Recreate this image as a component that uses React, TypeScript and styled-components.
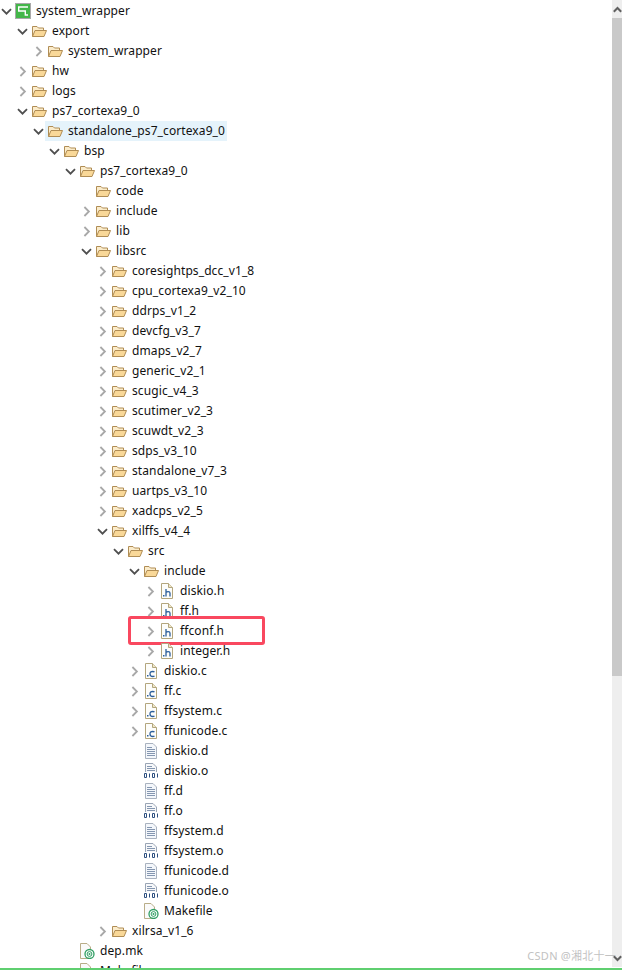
import React from "react";
import styled, { createGlobalStyle } from "styled-components";

type Kind = "project" | "folder" | "h" | "c" | "text" | "object" | "make";
type Toggle = "open" | "closed" | "none";
type Node = { depth: number; kind: Kind; label: string; toggle: Toggle; selected?: boolean; marked?: boolean };

const n = (depth: number, kind: Kind, label: string, toggle: Toggle = "none", extra = {}): Node => ({
  depth,
  kind,
  label,
  toggle,
  ...extra,
});

const nodes: Node[] = [
  n(0, "project", "system_wrapper", "open"),
  n(1, "folder", "export", "open"),
  n(2, "folder", "system_wrapper", "closed"),
  n(1, "folder", "hw", "closed"),
  n(1, "folder", "logs", "closed"),
  n(1, "folder", "ps7_cortexa9_0", "open"),
  n(2, "folder", "standalone_ps7_cortexa9_0", "open", { selected: true }),
  n(3, "folder", "bsp", "open"),
  n(4, "folder", "ps7_cortexa9_0", "open"),
  n(5, "folder", "code"),
  n(5, "folder", "include", "closed"),
  n(5, "folder", "lib", "closed"),
  n(5, "folder", "libsrc", "open"),
  n(6, "folder", "coresightps_dcc_v1_8", "closed"),
  n(6, "folder", "cpu_cortexa9_v2_10", "closed"),
  n(6, "folder", "ddrps_v1_2", "closed"),
  n(6, "folder", "devcfg_v3_7", "closed"),
  n(6, "folder", "dmaps_v2_7", "closed"),
  n(6, "folder", "generic_v2_1", "closed"),
  n(6, "folder", "scugic_v4_3", "closed"),
  n(6, "folder", "scutimer_v2_3", "closed"),
  n(6, "folder", "scuwdt_v2_3", "closed"),
  n(6, "folder", "sdps_v3_10", "closed"),
  n(6, "folder", "standalone_v7_3", "closed"),
  n(6, "folder", "uartps_v3_10", "closed"),
  n(6, "folder", "xadcps_v2_5", "closed"),
  n(6, "folder", "xilffs_v4_4", "open"),
  n(7, "folder", "src", "open"),
  n(8, "folder", "include", "open"),
  n(9, "h", "diskio.h", "closed"),
  n(9, "h", "ff.h", "closed"),
  n(9, "h", "ffconf.h", "closed", { marked: true }),
  n(9, "h", "integer.h", "closed"),
  n(8, "c", "diskio.c", "closed"),
  n(8, "c", "ff.c", "closed"),
  n(8, "c", "ffsystem.c", "closed"),
  n(8, "c", "ffunicode.c", "closed"),
  n(8, "text", "diskio.d"),
  n(8, "object", "diskio.o"),
  n(8, "text", "ff.d"),
  n(8, "object", "ff.o"),
  n(8, "text", "ffsystem.d"),
  n(8, "object", "ffsystem.o"),
  n(8, "text", "ffunicode.d"),
  n(8, "object", "ffunicode.o"),
  n(8, "make", "Makefile"),
  n(6, "folder", "xilrsa_v1_6", "closed"),
  n(4, "make", "dep.mk"),
  n(4, "make", "Makefile"),
];

const GlobalStyle = createGlobalStyle`
  html, body {
    margin: 0;
    padding: 0;
    background: #fff;
  }
`;

const Page = styled.div`
  width: 622px;
  height: 970px;
  display: flex;
  flex-direction: column;
  overflow: hidden;
  font-family: "Noto Sans", "Noto Sans CJK SC", sans-serif;
  font-size: 12px;
  letter-spacing: 0.1px;
  color: #111;
`;

const Main = styled.div`
  flex: 1;
  min-height: 0;
  display: flex;
  position: relative;
`;

const Tree = styled.div`
  flex: 1;
  min-width: 0;
  padding-top: 1px;
  overflow: hidden;
`;

const Row = styled.div<{ $depth: number }>`
  position: relative;
  height: 20px;
  display: flex;
  align-items: center;
  padding-left: ${(p) => p.$depth * 16}px;
  white-space: nowrap;
`;

const ToggleSlot = styled.span`
  width: 13px;
  height: 20px;
  display: flex;
  align-items: center;
  justify-content: center;
  flex: none;
`;

const Item = styled.span<{ $selected?: boolean }>`
  height: 20px;
  display: flex;
  align-items: center;
  gap: 5px;
  padding: 0 2px;
  background: ${(p) => (p.$selected ? "#e5f3fb" : "transparent")};
`;

const Label = styled.span`
  line-height: 20px;
`;

const Mark = styled.span`
  position: absolute;
  left: 128px;
  top: -5px;
  width: 131px;
  height: 23px;
  border: 3px solid #f9485f;
  border-radius: 3px;
`;

const Scrollbar = styled.div`
  width: 10px;
  flex: none;
  display: flex;
  flex-direction: column;
  background: #eeeeee;
  margin-bottom: 1px;
`;

const ScrollButton = styled.div`
  height: 18px;
  display: flex;
  align-items: center;
  justify-content: center;
  flex: none;
`;

const Thumb = styled.div`
  height: 658px;
  background: #c9c9c9;
`;

const ScrollTrack = styled.div`
  flex: 1;
`;

const Watermark = styled.span`
  position: absolute;
  right: 6px;
  bottom: 4px;
  font-size: 11px;
  line-height: 16px;
  letter-spacing: 0.25px;
  color: #c2c2c2;
  white-space: nowrap;
`;

const StatusLine = styled.div`
  height: 2px;
  flex: none;
  background: #5fcf70;
`;

const Chevron = ({ open }: { open: boolean }) => (
  <svg width="11" height="11" viewBox="0 0 11 11" fill="none">
    {open ? (
      <path d="M1 3.2 L5.5 7.7 L10 3.2" stroke="#4f4f4f" strokeWidth="1.8" />
    ) : (
      <path d="M3.4 1 L7.9 5.5 L3.4 10" stroke="#a8a8a8" strokeWidth="1.8" />
    )}
  </svg>
);

const FolderIcon = () => (
  <svg width="16" height="16" viewBox="0 0 16 16">
    <path d="M1.5 13.5 V3.5 H6 L7.5 5 H12.5 V7.5" fill="#fbeccb" stroke="#b08d55" />
    <path d="M1.5 13.5 L4 7.5 H15.5 L13 13.5 Z" fill="#f9d898" stroke="#b08d55" strokeLinejoin="round" />
  </svg>
);

const ProjectIcon = () => (
  <svg width="16" height="16" viewBox="0 0 16 16">
    <rect x="0.5" y="0.5" width="15" height="15" fill="#43b649" stroke="#a9a9a9" />
    <path d="M3 4 H13 M3.7 4 V8 H10.3 V12 H13" fill="none" stroke="#fff" strokeWidth="1.4" />
  </svg>
);

const SourceIcon = ({ letter }: { letter: "h" | "c" }) => (
  <svg width="16" height="16" viewBox="0 0 16 16">
    <path d="M2.5 0.5 H9.5 L13.5 4.5 V15.5 H2.5 Z" fill="#fdfdfa" stroke="#b3a67e" />
    <path d="M9.5 0.5 V4.5 H13.5" fill="#efe6c8" stroke="#b3a67e" />
    <rect x="4" y="12" width="1.5" height="1.5" fill="#2d5f9b" />
    {letter === "h" ? (
      <path d="M7 6 V13.5 M7 9.5 Q7.6 8.6 9.2 8.6 Q11 8.6 11 10 V13.5" fill="none" stroke="#2d5f9b" strokeWidth="1.3" />
    ) : (
      <path d="M11.5 9 Q10.8 8.5 9.8 8.5 Q7 8.5 7 11 Q7 13.5 9.8 13.5 Q10.8 13.5 11.5 13" fill="none" stroke="#2d5f9b" strokeWidth="1.3" />
    )}
  </svg>
);

const TextIcon = () => (
  <svg width="16" height="16" viewBox="0 0 16 16">
    <path d="M2.5 0.5 H10 L13.5 4 V15.5 H2.5 Z" fill="#f4f7fb" stroke="#a9b2bf" />
    <path d="M4 4.5 H9 M4 6.5 H12 M4 8.5 H12 M4 10.5 H12 M4 12.5 H12" stroke="#8496b0" />
  </svg>
);

const ObjectIcon = () => (
  <svg width="16" height="16" viewBox="0 0 16 16">
    <path d="M2.5 0.5 H10 L13.5 4 V15.5 H2.5 Z" fill="#f7f8fa" stroke="#9aa5b5" />
    <path d="M4 3.5 H9 M4 5.5 H12 M4 7.5 H12" stroke="#8496b0" />
    <rect x="0" y="9" width="16" height="7" fill="#fff" />
    <path d="M1.5 10.5 H3.5 V14.5 H1.5 Z M6.5 10.5 V14.5 M9.5 10.5 H11.5 V14.5 H9.5 Z M14.5 10.5 V14.5" fill="none" stroke="#2d4f80" />
  </svg>
);

const MakeIcon = () => (
  <svg width="16" height="16" viewBox="0 0 16 16">
    <path d="M1.5 0.5 H8 L11.5 4 V15.5 H1.5 Z" fill="#fafafa" stroke="#b9ad88" />
    <circle cx="10.5" cy="11" r="4.5" fill="#fff" stroke="#2f9e63" strokeWidth="1.3" />
    <circle cx="10.5" cy="11" r="2.4" fill="none" stroke="#2f9e63" />
    <circle cx="10.5" cy="11" r="1" fill="#2f9e63" />
  </svg>
);

const NodeIcon = ({ kind }: { kind: Kind }) => {
  switch (kind) {
    case "project":
      return <ProjectIcon />;
    case "folder":
      return <FolderIcon />;
    case "h":
    case "c":
      return <SourceIcon letter={kind} />;
    case "text":
      return <TextIcon />;
    case "object":
      return <ObjectIcon />;
    default:
      return <MakeIcon />;
  }
};

export default function App() {
  return (
    <Page>
      <GlobalStyle />
      <Main>
        <Tree>
          {nodes.map((node, i) => (
            <Row key={i} $depth={node.depth}>
              <ToggleSlot>{node.toggle !== "none" && <Chevron open={node.toggle === "open"} />}</ToggleSlot>
              <Item $selected={node.selected}>
                <NodeIcon kind={node.kind} />
                <Label>{node.label}</Label>
              </Item>
              {node.marked && <Mark />}
            </Row>
          ))}
        </Tree>
        <Scrollbar>
          <ScrollButton>
            <svg width="9" height="7" viewBox="0 0 9 7" fill="none">
              <path d="M0.8 5.8 L4.5 2 L8.2 5.8" stroke="#606060" strokeWidth="2" />
            </svg>
          </ScrollButton>
          <Thumb />
          <ScrollTrack />
          <ScrollButton>
            <svg width="9" height="7" viewBox="0 0 9 7" fill="none">
              <path d="M0.8 1.2 L4.5 5 L8.2 1.2" stroke="#606060" strokeWidth="2" />
            </svg>
          </ScrollButton>
        </Scrollbar>
        <Watermark>CSDN @湘北十一</Watermark>
      </Main>
      <StatusLine />
    </Page>
  );
}
